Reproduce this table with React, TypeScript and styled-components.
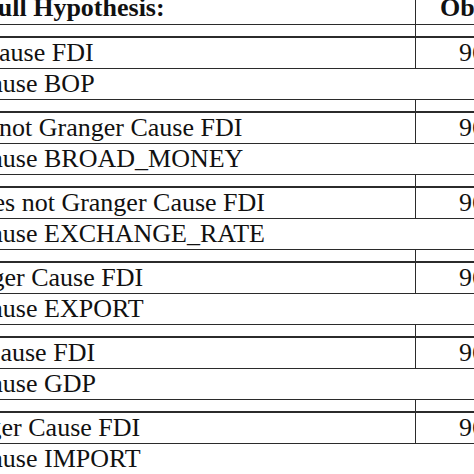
import React from "react";
import styled, { createGlobalStyle } from "styled-components";

const GlobalStyle = createGlobalStyle`
  html, body {
    margin: 0;
    padding: 0;
    background: #ffffff;
    overflow: hidden;
  }
  body {
    width: 474px;
    height: 474px;
  }
`;

const LINE = "#2b2b2b";

// the table is a crop of a wider figure: its first column starts left of the page
const Table = styled.div`
  display: flex;
  flex-direction: column;
  width: 900px;
  margin-left: -260px;
  font-family: "Liberation Serif", "Times New Roman", serif;
  font-size: 26px;
  color: #111111;
`;

const Row = styled.div<{ $height: number; $rule: number }>`
  display: grid;
  grid-template-columns: 676px 1fr;
  height: ${({ $height }) => $height}px;
  border-bottom: ${({ $rule }) => $rule}px solid ${LINE};
  white-space: nowrap;
`;

const Cell = styled.div<{ $divided?: boolean; $span?: boolean; $pad?: number }>`
  box-sizing: border-box;
  height: 100%;
  padding-left: ${({ $pad }) => $pad ?? 0}px;
  line-height: inherit;
  border-right: ${({ $divided }) => ($divided ? `1px solid ${LINE}` : "none")};
  grid-column: ${({ $span }) => ($span ? "1 / -1" : "auto")};
`;

const HeaderRow = styled(Row)`
  font-weight: bold;
  line-height: 16px;
`;

const DataRow = styled(Row)`
  line-height: 30px;
`;

type Test = { cause: string; effect: string; obs: string };

const tests: Test[] = [
  { cause: "BOP", effect: "FDI", obs: "96" },
  { cause: "BROAD_MONEY", effect: "FDI", obs: "96" },
  { cause: "EXCHANGE_RATE", effect: "FDI", obs: "96" },
  { cause: "EXPORT", effect: "FDI", obs: "96" },
  { cause: "GDP", effect: "FDI", obs: "96" },
  { cause: "IMPORT", effect: "FDI", obs: "96" },
];

const TestBlock: React.FC<{ test: Test }> = ({ test }) => (
  <>
    <Row $height={11} $rule={2}>
      <Cell $divided />
      <Cell />
    </Row>
    <DataRow $height={30} $rule={1}>
      <Cell $divided>
        {test.cause} does not Granger Cause {test.effect}
      </Cell>
      <Cell $pad={43}>{test.obs}</Cell>
    </DataRow>
    <DataRow $height={30} $rule={1}>
      <Cell $span>
        {test.effect} does not Granger Cause {test.cause}
      </Cell>
    </DataRow>
  </>
);

export default function App() {
  return (
    <>
      <GlobalStyle />
      <Table>
        <HeaderRow $height={24} $rule={1}>
          <Cell $divided $pad={239}>
            Null Hypothesis:
          </Cell>
          <Cell $pad={24}>Obs</Cell>
        </HeaderRow>
        {tests.map((t) => (
          <TestBlock key={t.cause} test={t} />
        ))}
      </Table>
    </>
  );
}
